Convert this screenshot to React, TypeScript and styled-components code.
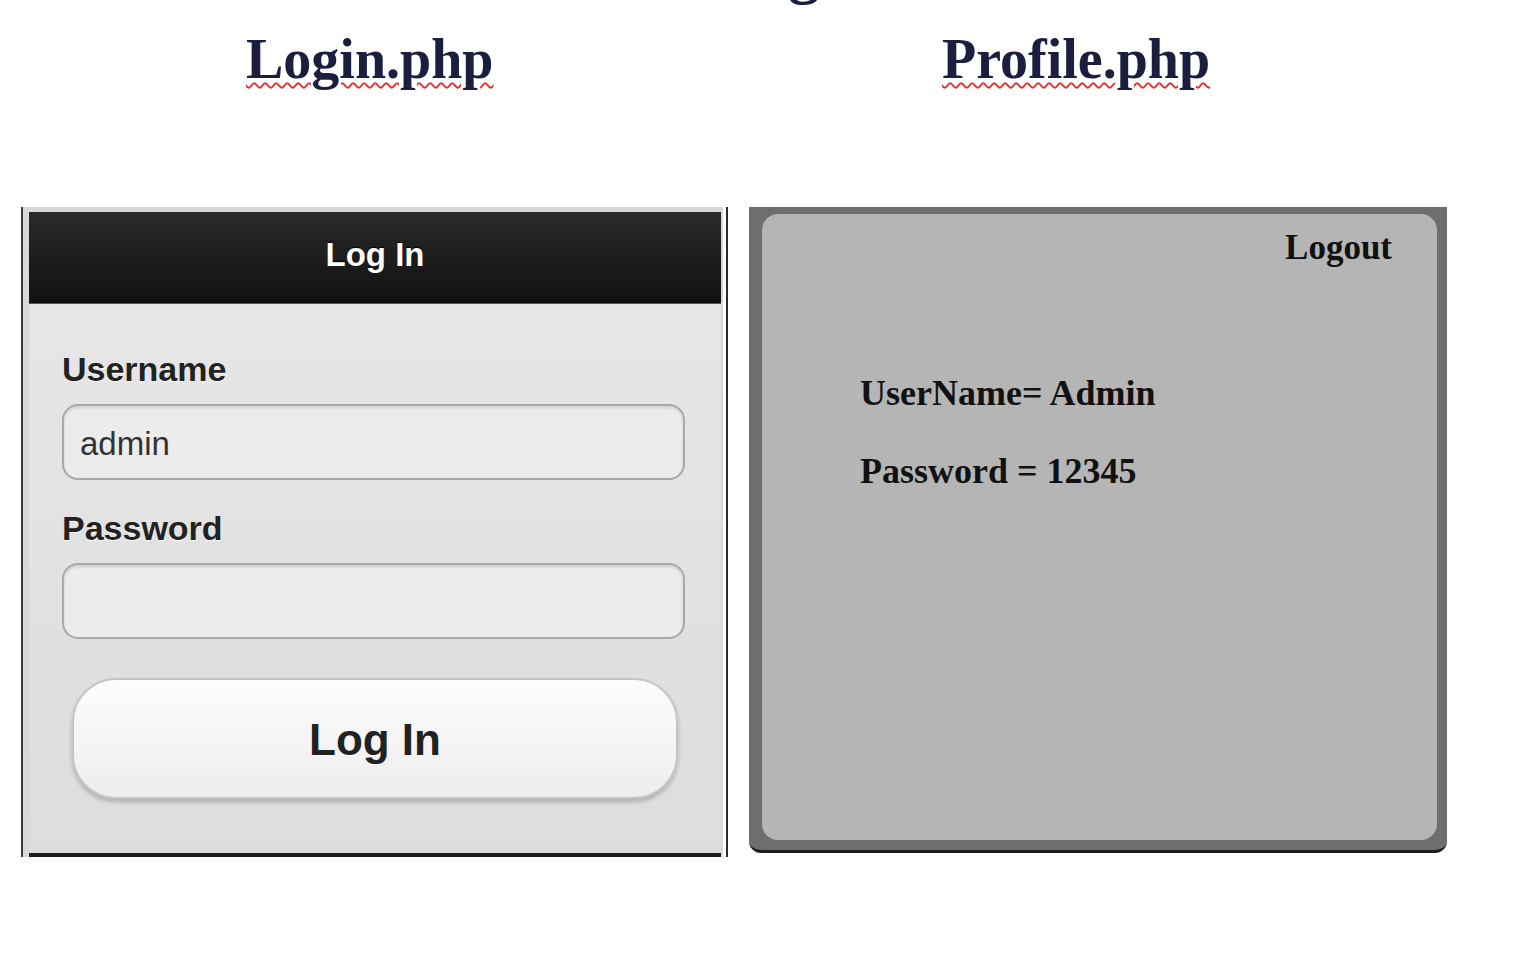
import styled, { createGlobalStyle } from "styled-components";

const GlobalStyle = createGlobalStyle`
  html, body {
    margin: 0;
    padding: 0;
    background: #ffffff;
  }
  body {
    font-family: "Liberation Serif", "Times New Roman", serif;
  }
`;

interface ITitle {
  indent: number;
}

export default function App() {
  return (
    <>
      <GlobalStyle />
      <Page>
        <TopCrop>
          <CutGlyph>g</CutGlyph>
        </TopCrop>
        <Layout>
          <Title indent={225}>
            <Misspelled>Login.php</Misspelled>
          </Title>
          <Title indent={193}>
            <Misspelled>Profile.php</Misspelled>
          </Title>

          <PhoneFrame>
            <Screen>
              <HeaderBar>Log In</HeaderBar>
              <FormBody>
                <FieldLabel>Username</FieldLabel>
                <TextInput defaultValue="admin" />
                <FieldLabel spaced>Password</FieldLabel>
                <TextInput type="password" defaultValue="" />
                <LoginButton>Log In</LoginButton>
              </FormBody>
            </Screen>
          </PhoneFrame>

          <ProfileFrame>
            <ProfileCard>
              <LogoutLink>Logout</LogoutLink>
              <InfoLine>UserName= Admin</InfoLine>
              <InfoLine second>Password = 12345</InfoLine>
            </ProfileCard>
          </ProfileFrame>
        </Layout>
      </Page>
    </>
  );
}

const Page = styled.div`
  width: 1514px;
  min-height: 970px;
`;

const TopCrop = styled.div`
  height: 6px;
  overflow: hidden;
  padding-left: 788px;
`;

const CutGlyph = styled.span`
  display: block;
  margin-top: -62px;
  font-size: 64px;
  line-height: 1;
  font-weight: 700;
  color: #1c1e40;
`;

const Layout = styled.div`
  display: grid;
  grid-template-columns: 707px 698px;
  column-gap: 21px;
  padding-left: 21px;
  margin-top: 25px;
`;

const Title = styled.h1<ITitle>`
  margin: 0 0 120px 0;
  padding-left: ${(props) => props.indent}px;
  height: 56px;
  font-size: 56px;
  line-height: 1;
  font-weight: 700;
  color: #1c1e40;
  white-space: nowrap;
`;

const Misspelled = styled.span`
  text-decoration: underline wavy #e8302b;
  text-decoration-thickness: 1.5px;
  text-underline-offset: 4px;
`;

/* left: jQuery-mobile style login screen */
const PhoneFrame = styled.div`
  display: flex;
  height: 650px;
  border-left: 2px solid #3c3c3c;
  border-right: 2px solid #2c2c2c;
  background: #ffffff;
`;

const Screen = styled.div`
  flex: 1;
  display: flex;
  flex-direction: column;
  margin-right: 3px;
  padding: 5px 2px 0 6px;
  background: #d8d8d8;
`;

const HeaderBar = styled.div`
  box-sizing: border-box;
  height: 92px;
  padding-bottom: 6px;
  display: flex;
  align-items: center;
  justify-content: center;
  background: linear-gradient(#2a2a2a, #111111);
  border-bottom: 1px solid #565656;
  color: #ffffff;
  font-family: "Liberation Sans", Arial, sans-serif;
  font-weight: 700;
  font-size: 33px;
  text-shadow: 0 -1px 1px #000;
`;

const FormBody = styled.div`
  flex: 1;
  display: flex;
  flex-direction: column;
  padding: 45px 36px 0 33px;
  background: linear-gradient(#e6e6e6, #dddddd);
  border-bottom: 4px solid #1e1e1e;
`;

const FieldLabel = styled.label<{ spaced?: boolean }>`
  display: block;
  margin-top: ${(props) => (props.spaced ? "28px" : "0")};
  margin-bottom: 15px;
  font-family: "Liberation Sans", Arial, sans-serif;
  font-weight: 700;
  font-size: 34px;
  line-height: 40px;
  color: #222222;
  text-shadow: 0 1px 0 #ffffff;
`;

const TextInput = styled.input`
  box-sizing: border-box;
  width: 623px;
  height: 76px;
  padding: 3px 16px 0;
  border: 2px solid #a9a9a9;
  border-radius: 16px;
  background: #ececec;
  box-shadow: inset 0 2px 3px rgba(0, 0, 0, 0.12);
  font-family: "Liberation Sans", Arial, sans-serif;
  font-size: 33px;
  color: #333333;
  outline: none;
`;

const LoginButton = styled.button`
  box-sizing: border-box;
  width: 606px;
  height: 121px;
  margin: 39px 0 0 10px;
  padding-top: 4px;
  border: 2px solid #c4c4c4;
  border-radius: 44px;
  background: linear-gradient(#fdfdfd, #ededed);
  box-shadow: 0 3px 4px rgba(0, 0, 0, 0.22);
  font-family: "Liberation Sans", Arial, sans-serif;
  font-weight: 700;
  font-size: 44px;
  color: #222222;
  text-shadow: 0 1px 0 #ffffff;
  cursor: pointer;
`;

/* right: profile page */
const ProfileFrame = styled.div`
  box-sizing: border-box;
  height: 646px;
  display: flex;
  padding: 7px 10px 10px 13px;
  background: #6e6e6e;
  border-bottom: 3px solid #1e1e1e;
  border-radius: 0 0 12px 12px;
`;

const ProfileCard = styled.div`
  flex: 1;
  display: flex;
  flex-direction: column;
  padding: 13px 45px 0 98px;
  background: #b5b5b5;
  border-radius: 16px;
`;

const LogoutLink = styled.div`
  align-self: flex-end;
  font-size: 35px;
  line-height: 42px;
  font-weight: 700;
  color: #111111;
  margin-bottom: 103px;
`;

const InfoLine = styled.div<{ second?: boolean }>`
  margin-top: ${(props) => (props.second ? "36px" : "0")};
  font-size: 36px;
  line-height: 42px;
  font-weight: 700;
  color: #111111;
`;
